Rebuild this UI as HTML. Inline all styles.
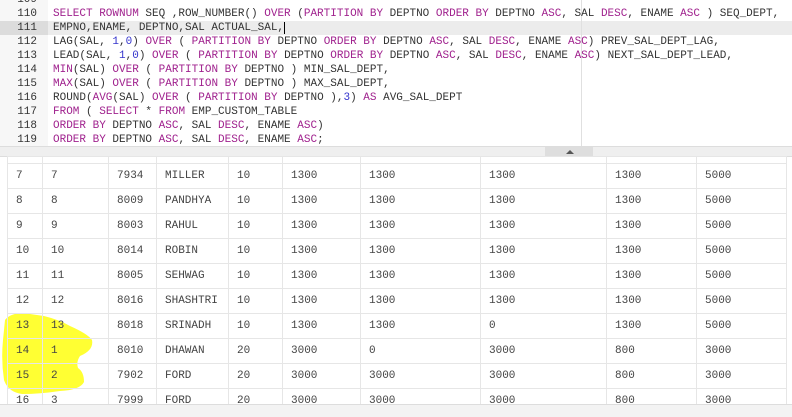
<!DOCTYPE html>
<html><head><style>
body{margin:0;width:792px;height:416px;overflow:hidden;background:#fff;position:relative;font-family:"Liberation Mono",monospace;}
.gut{position:absolute;left:0;top:0;width:48px;height:146px;background:#f7f7f7;}
.ln{position:absolute;left:0;width:37px;text-align:right;font-size:11px;color:#333;line-height:14px;}
.cl{position:absolute;left:53px;font-size:11px;color:#333;line-height:14px;white-space:pre;}
.k{color:#a0228e}.n{color:#3333cc}
.hl{position:absolute;left:0;top:21px;width:792px;height:14px;background:#ececec;}
.div{position:absolute;left:0;top:146px;width:792px;height:9px;background:#efefef;border-top:1px solid #ddd;border-bottom:1px solid #ddd;}
table{position:absolute;left:7px;top:156px;border-collapse:collapse;font-size:11px;color:#444;}
td{border:1px solid #e6e6e6;height:24px;padding:0 0 0 8px;white-space:nowrap;}
tr.h td{height:6px;}
.bot{position:absolute;left:0;top:404px;width:792px;height:12px;background:#f3f3f3;border-top:1px solid #ddd;}
</style></head><body>
<div class="gut"></div>
<div class="hl"></div>
<div style="position:absolute;left:0;top:21px;width:48px;height:14px;background:#dcdcdc"></div>
<div style="position:absolute;left:581px;top:0;width:1px;height:146px;background:#e0e0e0"></div>
<div class="ln" style="top:-7px">109</div>
<div class="ln" style="top:7px">110</div><div class="ln" style="top:21px">111</div><div class="ln" style="top:35px">112</div><div class="ln" style="top:49px">113</div><div class="ln" style="top:63px">114</div><div class="ln" style="top:77px">115</div><div class="ln" style="top:91px">116</div><div class="ln" style="top:105px">117</div><div class="ln" style="top:119px">118</div><div class="ln" style="top:133px">119</div>
<div class="cl" style="top:7px"><span class="k">SELECT ROWNUM</span> SEQ ,ROW_NUMBER() <span class="k">OVER</span> (<span class="k">PARTITION BY</span> DEPTNO <span class="k">ORDER BY</span> DEPTNO <span class="k">ASC</span>, SAL <span class="k">DESC</span>, ENAME <span class="k">ASC</span> ) SEQ_DEPT,</div>
<div class="cl" style="top:21px">EMPNO,ENAME, DEPTNO,SAL ACTUAL_SAL,<span style="border-left:1px solid #000"></span></div>
<div class="cl" style="top:35px">LAG(SAL, <span class="n">1</span>,<span class="n">0</span>) <span class="k">OVER</span> ( <span class="k">PARTITION BY</span> DEPTNO <span class="k">ORDER BY</span> DEPTNO <span class="k">ASC</span>, SAL <span class="k">DESC</span>, ENAME <span class="k">ASC</span>) PREV_SAL_DEPT_LAG,</div>
<div class="cl" style="top:49px">LEAD(SAL, <span class="n">1</span>,<span class="n">0</span>) <span class="k">OVER</span> ( <span class="k">PARTITION BY</span> DEPTNO <span class="k">ORDER BY</span> DEPTNO <span class="k">ASC</span>, SAL <span class="k">DESC</span>, ENAME <span class="k">ASC</span>) NEXT_SAL_DEPT_LEAD,</div>
<div class="cl" style="top:63px"><span class="k">MIN</span>(SAL) <span class="k">OVER</span> ( <span class="k">PARTITION BY</span> DEPTNO ) MIN_SAL_DEPT,</div>
<div class="cl" style="top:77px"><span class="k">MAX</span>(SAL) <span class="k">OVER</span> ( <span class="k">PARTITION BY</span> DEPTNO ) MAX_SAL_DEPT,</div>
<div class="cl" style="top:91px">ROUND(<span class="k">AVG</span>(SAL) <span class="k">OVER</span> ( <span class="k">PARTITION BY</span> DEPTNO ),<span class="n">3</span>) <span class="k">AS</span> AVG_SAL_DEPT</div>
<div class="cl" style="top:105px"><span class="k">FROM</span> ( <span class="k">SELECT</span> * <span class="k">FROM</span> EMP_CUSTOM_TABLE</div>
<div class="cl" style="top:119px"><span class="k">ORDER BY</span> DEPTNO <span class="k">ASC</span>, SAL <span class="k">DESC</span>, ENAME <span class="k">ASC</span>)</div>
<div class="cl" style="top:133px"><span class="k">ORDER BY</span> DEPTNO <span class="k">ASC</span>, SAL <span class="k">DESC</span>, ENAME <span class="k">ASC</span>;</div>
<div class="div"><div style="position:absolute;left:545px;top:0;width:48px;height:9px;background:#dedede"></div><div style="position:absolute;left:566px;top:3px;width:0;height:0;border-left:4px solid transparent;border-right:4px solid transparent;border-bottom:4px solid #555"></div></div>
<svg style="position:absolute;left:0;top:0" width="792" height="416"><path d="M5 320 Q12 311 30 314 L44 316 Q60 320 70 326 Q88 334 92 340 Q94 350 80 356 Q76 362 78 368 Q84 372 84 382 Q80 390 60 391 Q40 394 22 394 Q8 392 4 380 Q1 360 3 340 Z" fill="#ffff33"/></svg>
<table>
<colgroup><col style="width:35px"><col style="width:66px"><col style="width:48px"><col style="width:72px"><col style="width:54px"><col style="width:78px"><col style="width:120px"><col style="width:126px"><col style="width:90px"><col style="width:90px"></colgroup>
<tr class="h"><td></td><td></td><td></td><td></td><td></td><td></td><td></td><td></td><td></td><td></td></tr>
<tr><td>7</td><td>7</td><td>7934</td><td>MILLER</td><td>10</td><td>1300</td><td>1300</td><td>1300</td><td>1300</td><td>5000</td></tr>
<tr><td>8</td><td>8</td><td>8009</td><td>PANDHYA</td><td>10</td><td>1300</td><td>1300</td><td>1300</td><td>1300</td><td>5000</td></tr>
<tr><td>9</td><td>9</td><td>8003</td><td>RAHUL</td><td>10</td><td>1300</td><td>1300</td><td>1300</td><td>1300</td><td>5000</td></tr>
<tr><td>10</td><td>10</td><td>8014</td><td>ROBIN</td><td>10</td><td>1300</td><td>1300</td><td>1300</td><td>1300</td><td>5000</td></tr>
<tr><td>11</td><td>11</td><td>8005</td><td>SEHWAG</td><td>10</td><td>1300</td><td>1300</td><td>1300</td><td>1300</td><td>5000</td></tr>
<tr><td>12</td><td>12</td><td>8016</td><td>SHASHTRI</td><td>10</td><td>1300</td><td>1300</td><td>1300</td><td>1300</td><td>5000</td></tr>
<tr><td>13</td><td>13</td><td>8018</td><td>SRINADH</td><td>10</td><td>1300</td><td>1300</td><td>0</td><td>1300</td><td>5000</td></tr>
<tr><td>14</td><td>1</td><td>8010</td><td>DHAWAN</td><td>20</td><td>3000</td><td>0</td><td>3000</td><td>800</td><td>3000</td></tr>
<tr><td>15</td><td>2</td><td>7902</td><td>FORD</td><td>20</td><td>3000</td><td>3000</td><td>3000</td><td>800</td><td>3000</td></tr>
<tr><td>16</td><td>3</td><td>7999</td><td>FORD</td><td>20</td><td>3000</td><td>3000</td><td>3000</td><td>800</td><td>3000</td></tr>
</table>
<div class="bot"></div>
</body></html>
